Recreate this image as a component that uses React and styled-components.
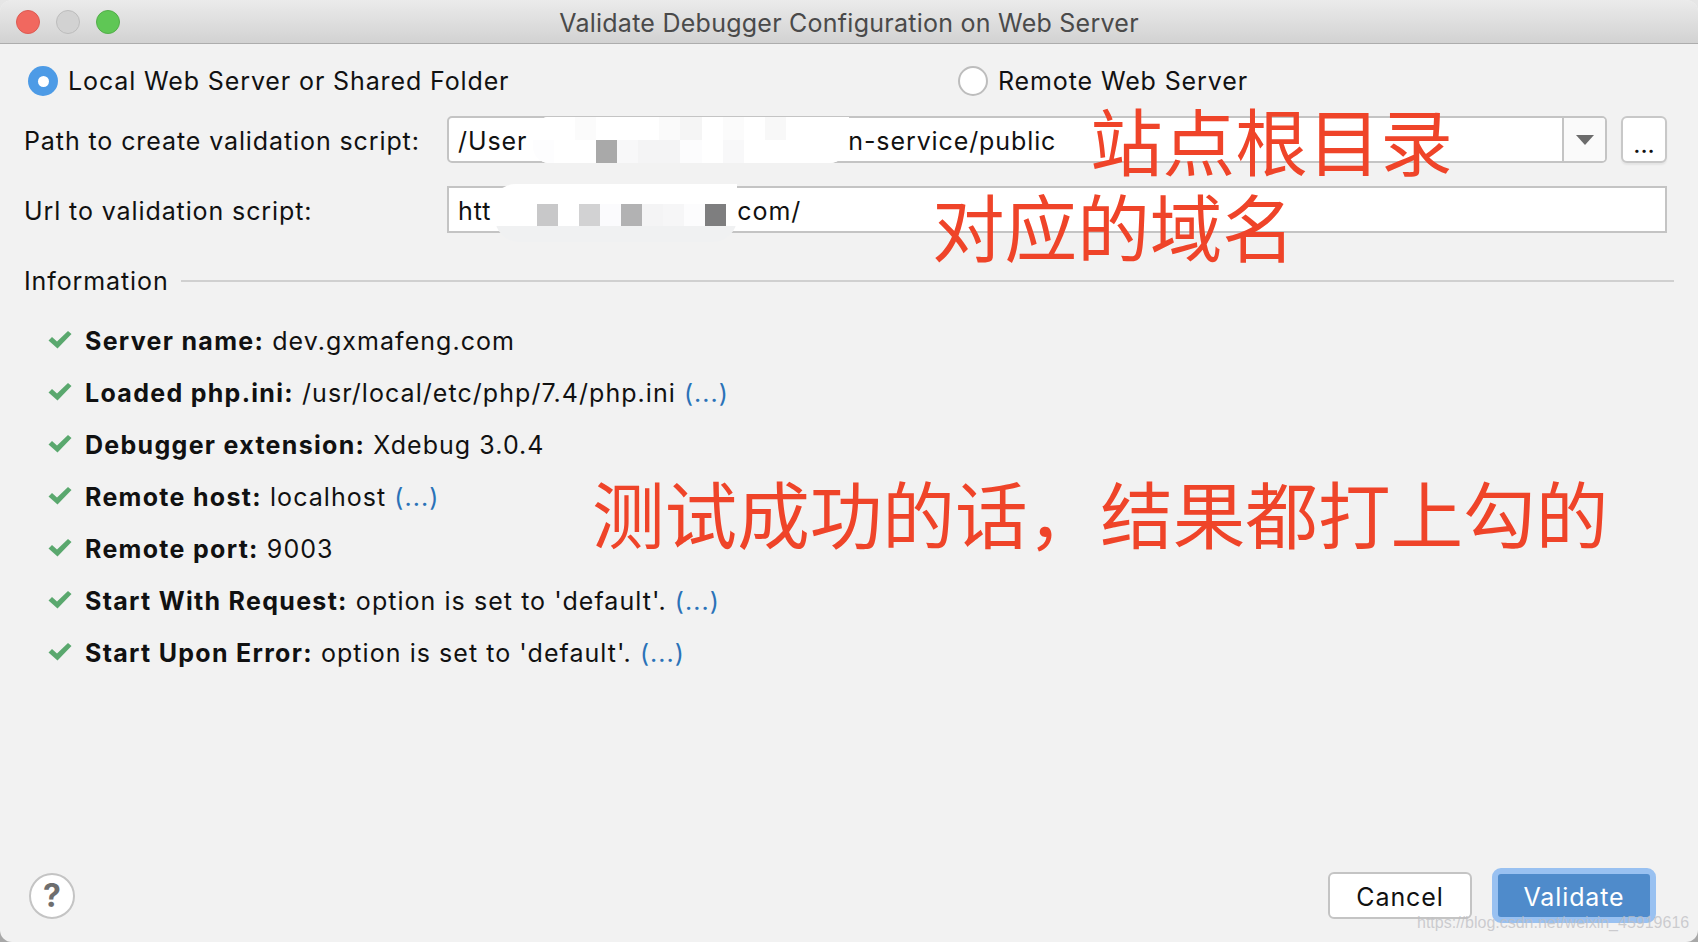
import React from "react";
import styled, { createGlobalStyle } from "styled-components";

const GlobalStyle = createGlobalStyle`
    html, body {
        margin: 0;
        padding: 0;
        background: linear-gradient(#e6e6e6, #a8a8a8);
    }
    * {
        box-sizing: border-box;
    }
`;

const fields = [
    { label: "Server name:", value: "dev.gxmafeng.com" },
    { label: "Loaded php.ini:", value: "/usr/local/etc/php/7.4/php.ini", more: true },
    { label: "Debugger extension:", value: "Xdebug 3.0.4" },
    { label: "Remote host:", value: "localhost", more: true },
    { label: "Remote port:", value: "9003" },
    { label: "Start With Request:", value: "option is set to 'default'.", more: true },
    { label: "Start Upon Error:", value: "option is set to 'default'.", more: true },
];

const pathCells = [
    "#ffffff", "#ffffff", "#fbfbfb", "#ffffff", "#ffffff", "#ffffff", "#fafafa", "#f5f5f5", "#ffffff", "#fbfbfb", "#ffffff", "#f8f8f8", "#ffffff", "#ffffff", "#ffffff",
    "#fdfdfe", "#ffffff", "#ffffff", "#a9a9a9", "#f8f8f9", "#f4f4f5", "#f4f4f5", "#fcfcfd", "#ffffff", "#f8f8f9", "#ffffff", "#ffffff", "#ffffff", "#ffffff", "#ffffff",
];

const urlCells = [
    "#ffffff", "#ffffff", "#c8c8c9", "#ffffff", "#d2d2d3", "#fbfbfd", "#b2b2b3", "#f4f4f5", "#f6f6f7", "#fcfcfd", "#7e7e7f",
];

const Check = () => (
    <CheckIcon viewBox="0 0 24 18">
        <path d="M0.5 9.5 L4 6 L9 10.5 L20 0 L23.5 3 L9.5 17.5 Z" />
    </CheckIcon>
);

const App = () => {
    return (
        <Window>
            <GlobalStyle />
            <TitleBar>
                <Lights>
                    <Light $color="#f1685f" $edge="#dc5a52" />
                    <Light $color="#d2d2d2" $edge="#bcbcbc" />
                    <Light $color="#5fc755" $edge="#53ad4a" />
                </Lights>
                Validate Debugger Configuration on Web Server
            </TitleBar>
            <Content>
                <RadioRow>
                    <RadioOption>
                        <Radio $checked />
                        Local Web Server or Shared Folder
                    </RadioOption>
                    <RadioOption>
                        <Radio />
                        Remote Web Server
                    </RadioOption>
                </RadioRow>
                <FieldRow>
                    <Label>Path to create validation script:</Label>
                    <ComboBox>
                        <ComboText>
                            /User
                            <Gap />
                            n-service/public
                        </ComboText>
                        <PathPatch>
                            {pathCells.map((color, i) => (
                                <Cell key={i} $color={color} />
                            ))}
                        </PathPatch>
                        <ComboArrow>
                            <svg width="18" height="10" viewBox="0 0 18 10">
                                <path d="M0 0 H18 L9 10 Z" fill="#6b6b6b" />
                            </svg>
                        </ComboArrow>
                    </ComboBox>
                    <BrowseButton>...</BrowseButton>
                </FieldRow>
                <UrlRow>
                    <Label>Url to validation script:</Label>
                    <UrlInput>
                        htt
                        <UrlGap />
                        .com/
                        <UrlPatch>
                            <UrlCells>
                                {urlCells.map((color, i) => (
                                    <Cell key={i} $color={color} />
                                ))}
                            </UrlCells>
                        </UrlPatch>
                    </UrlInput>
                </UrlRow>
                <SectionHeader>
                    Information
                    <SectionLine />
                </SectionHeader>
                <InfoList>
                    {fields.map((item) => (
                        <InfoRow key={item.label}>
                            <Check />
                            <InfoText>
                                <strong>{item.label}</strong> {item.value}
                                {item.more && <MoreLink> (...)</MoreLink>}
                            </InfoText>
                        </InfoRow>
                    ))}
                </InfoList>
                <Footer>
                    <HelpButton>?</HelpButton>
                    <FooterActions>
                        <CancelButton>Cancel</CancelButton>
                        <ValidateButton>Validate</ValidateButton>
                    </FooterActions>
                </Footer>
            </Content>
            <RootNote>站点根目录</RootNote>
            <DomainNote>对应的域名</DomainNote>
            <SuccessNote>测试成功的话，结果都打上勾的</SuccessNote>
            <Watermark>https://blog.csdn.net/weixin_45919616</Watermark>
        </Window>
    );
};

const Window = styled.div`
    position: relative;
    width: 1698px;
    height: 942px;
    overflow: hidden;
    display: flex;
    flex-direction: column;
    background: #f2f2f2;
    border-radius: 12px;
    font-family: Inter, "Liberation Sans", sans-serif;
    font-size: 25px;
    color: #111111;
`;

const TitleBar = styled.div`
    position: relative;
    flex: none;
    height: 44px;
    display: flex;
    align-items: center;
    justify-content: center;
    padding-top: 2px;
    background: linear-gradient(#ebebeb, #d2d2d2);
    border-bottom: 1px solid #adadad;
    color: #4a4a4a;
    font-size: 25px;
    letter-spacing: 0.25px;
`;

const Lights = styled.div`
    position: absolute;
    left: 16px;
    top: 10px;
    display: flex;
    gap: 16px;
`;

const Light = styled.span`
    width: 24px;
    height: 24px;
    border-radius: 50%;
    background: ${(p) => p.$color};
    border: 1px solid ${(p) => p.$edge};
`;

const Content = styled.div`
    flex: 1;
    display: flex;
    flex-direction: column;
    padding: 22px 31px 19px 24px;
`;

const RadioRow = styled.div`
    display: grid;
    grid-template-columns: 930px 1fr;
    height: 30px;
    padding-left: 4px;
`;

const RadioOption = styled.label`
    display: flex;
    align-items: center;
    gap: 10px;
    letter-spacing: 0.88px;
`;

const Radio = styled.span`
    flex: none;
    width: 30px;
    height: 30px;
    border-radius: 50%;
    display: flex;
    align-items: center;
    justify-content: center;
    background: ${(p) => (p.$checked ? "#4d9be6" : "#ffffff")};
    border: ${(p) => (p.$checked ? "none" : "2px solid #bdbdbd")};
    &::after {
        content: "";
        display: ${(p) => (p.$checked ? "block" : "none")};
        width: 11px;
        height: 11px;
        border-radius: 50%;
        background: #ffffff;
    }
`;

const FieldRow = styled.div`
    display: flex;
    align-items: center;
    height: 47px;
    margin-top: 20px;
`;

const UrlRow = styled(FieldRow)`
    margin-top: 23px;
`;

const Label = styled.div`
    flex: none;
    width: 423px;
    padding-top: 2px;
    letter-spacing: 0.9px;
`;

const ComboBox = styled.div`
    position: relative;
    flex: none;
    width: 1160px;
    height: 47px;
    display: flex;
    background: #ffffff;
    border: 2px solid #c4c4c4;
    border-radius: 5px;
`;

const ComboText = styled.div`
    flex: 1;
    display: flex;
    align-items: center;
    padding: 2px 0 0 9px;
    letter-spacing: 0.9px;
`;

const Gap = styled.span`
    width: 321px;
`;

const ComboArrow = styled.div`
    flex: none;
    width: 43px;
    display: flex;
    align-items: center;
    justify-content: center;
    background: #fafafa;
    border-left: 2px solid #c4c4c4;
    border-radius: 0 3px 3px 0;
`;

const BrowseButton = styled.button`
    flex: none;
    width: 46px;
    height: 47px;
    margin-left: 14px;
    padding: 8px 0 0;
    background: #ffffff;
    border: 2px solid #c8c8c8;
    border-radius: 6px;
    box-shadow: 0 2px 2px rgba(0, 0, 0, 0.06);
    font-family: inherit;
    font-size: 25px;
    color: #111111;
`;

const PathPatch = styled.div`
    position: absolute;
    left: 84px;
    top: -1px;
    width: 316px;
    height: 46px;
    display: grid;
    grid-template-columns: repeat(15, 1fr);
    grid-template-rows: 1fr 1fr;
    background: #ffffff;
    border-radius: 16px 0 20px 16px;
    overflow: hidden;
`;

const Cell = styled.span`
    background: ${(p) => p.$color};
`;

const UrlInput = styled.div`
    position: relative;
    flex: none;
    width: 1220px;
    height: 47px;
    display: flex;
    align-items: center;
    padding: 2px 0 0 9px;
    background: #ffffff;
    border: 2px solid #c4c4c4;
    letter-spacing: 0.9px;
`;

const UrlGap = styled.span`
    width: 238px;
`;

const UrlPatch = styled.div`
    position: absolute;
    left: 46px;
    top: -4px;
    width: 242px;
    height: 58px;
    padding-top: 20px;
    background: linear-gradient(#ffffff 42px, #f0f1f2 42px);
    border-radius: 20px 0 24px 24px;
`;

const UrlCells = styled.div`
    display: grid;
    grid-template-columns: repeat(11, 21px);
    grid-auto-rows: 22px;
`;

const SectionHeader = styled.div`
    display: flex;
    align-items: center;
    gap: 12px;
    height: 30px;
    margin-top: 33px;
    margin-right: -7px;
    letter-spacing: 0.9px;
`;

const SectionLine = styled.span`
    flex: 1;
    height: 2px;
    background: #d0d0d0;
`;

const InfoList = styled.div`
    display: flex;
    flex-direction: column;
    gap: 12px;
    margin-top: 25px;
    padding-left: 24px;
`;

const InfoRow = styled.div`
    display: flex;
    align-items: center;
    gap: 13px;
    height: 40px;
`;

const CheckIcon = styled.svg`
    flex: none;
    width: 24px;
    height: 18px;
    margin-top: -2px;
    fill: #5aa86e;
`;

const InfoText = styled.div`
    letter-spacing: 1.05px;
    white-space: pre-wrap;
    strong {
        font-weight: 700;
        letter-spacing: 1.3px;
    }
`;

const MoreLink = styled.span`
    color: #2b72b8;
`;

const Footer = styled.div`
    display: flex;
    align-items: center;
    justify-content: space-between;
    margin-top: auto;
    padding-left: 5px;
    margin-right: 11px;
`;

const HelpButton = styled.button`
    width: 46px;
    height: 46px;
    padding: 0;
    border-radius: 50%;
    background: #ffffff;
    border: 2px solid #c4c4c4;
    color: #6e6e6e;
    font-family: inherit;
    font-size: 32px;
    font-weight: 700;
`;

const FooterActions = styled.div`
    display: flex;
    align-items: center;
    gap: 20px;
`;

const CancelButton = styled.button`
    width: 144px;
    height: 47px;
    padding: 2px 0 0;
    background: #ffffff;
    border: 2px solid #c4c4c4;
    border-radius: 6px;
    color: #111111;
    font-family: inherit;
    font-size: 25px;
    letter-spacing: 0.9px;
`;

const ValidateButton = styled.button`
    width: 164px;
    height: 55px;
    padding: 2px 0 0;
    background: #4f8bcb;
    border: 6px solid #99c1f1;
    border-radius: 9px;
    color: #ffffff;
    font-family: inherit;
    font-size: 25px;
    letter-spacing: 0.9px;
`;

const Note = styled.div`
    position: absolute;
    font-family: "Noto Sans CJK SC", sans-serif;
    font-size: 72.6px;
    line-height: 80px;
    color: #ef4429;
    white-space: nowrap;
`;

const RootNote = styled(Note)`
    left: 1090px;
    top: 99px;
`;

const DomainNote = styled(Note)`
    left: 932px;
    top: 185px;
`;

const SuccessNote = styled(Note)`
    left: 592px;
    top: 472px;
`;

const Watermark = styled.div`
    position: absolute;
    left: 1417px;
    top: 914px;
    font-family: "Liberation Sans", sans-serif;
    font-size: 16px;
    color: rgba(190, 190, 195, 0.75);
    white-space: nowrap;
`;

export default App;
